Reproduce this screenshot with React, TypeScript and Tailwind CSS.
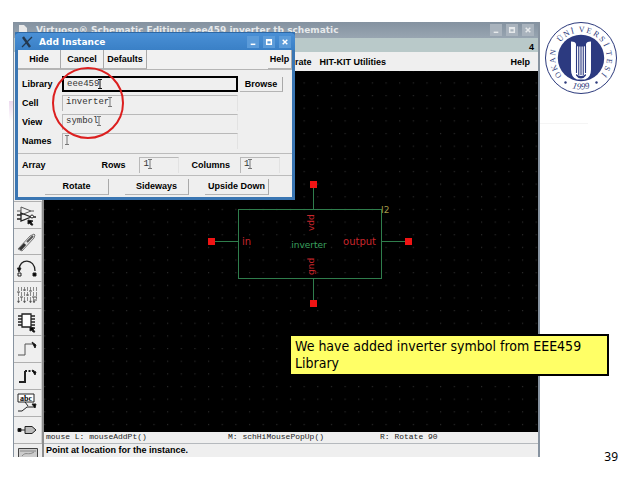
import type { ReactNode } from "react";

const sans = "font-['Liberation_Sans',Arial,sans-serif]";
const mono = "font-['Liberation_Mono','Courier_New',monospace]";
const title = "font-['DejaVu_Sans',Verdana,sans-serif]";

function WindowButtons({ className }: { className: string }) {
  const glyphs = [
    { label: "Minimize", d: "M4 9h5" },
    { label: "Maximize", d: "M4 4h5v5h-5zM4 5h5" },
    { label: "Close", d: "M4 4l5 5M9 4l-5 5" },
  ];
  return (
    <div className="ml-auto flex gap-1">
      {glyphs.map((g) => (
        <button key={g.label} aria-label={g.label} className={`size-3 ${className}`}>
          <svg viewBox="0 0 13 13" className="size-3" fill="none" stroke="currentColor" strokeWidth="1.6">
            <path d={g.d} />
          </svg>
        </button>
      ))}
    </div>
  );
}

function FormButton({ children, className = "" }: { children: ReactNode; className?: string }) {
  return (
    <button className={`border-r border-b border-r-[#a9a9a9] border-b-[#b4b4b4] text-center ${className}`}>
      {children}
    </button>
  );
}

function TextField({ id, value, active = false }: { id: string; value: string; active?: boolean }) {
  return (
    <div
      className={`relative h-4 text-[9px] font-normal text-[#333] ${mono} ${
        active ? "border-2 border-black" : "border-t border-l border-t-[#b9b9b9] border-l-[#b9b9b9] border-r border-r-[#e2e2e2]"
      }`}
    >
      <input
        id={id}
        defaultValue={value}
        className="block h-3 w-full bg-transparent pl-[3px] leading-3 outline-none"
      />
      <svg
        className="absolute top-0 h-3 w-1"
        style={{ left: `calc(${value.length}ch + 2px)` }}
        viewBox="0 0 4 12"
        fill="none"
        stroke={active ? "#111" : "#777"}
      >
        <path d="M0 1.5h4M2 1v9M0 10.5h4" />
      </svg>
    </div>
  );
}

function AddInstanceDialog() {
  return (
    <section className={`absolute top-8 left-[15px] w-[280px] border-[3px] border-t-0 border-[#3a76b3] bg-[#efefef] text-[9px] leading-3 font-bold text-black ${sans}`}>
      <header className={`-mx-[3px] flex h-[18px] items-center rounded-t-sm border-t border-[#2d68a5] bg-linear-to-b from-[#4a90d6] to-[#3a80c6] pr-1 pl-1.5 text-white ${title}`}>
        <svg viewBox="0 0 12 12" className="mr-1.5 h-3 w-3" fill="none" stroke="#23384f">
          <path d="M2 1l7 10" strokeWidth="2.4" />
          <path d="M11 1L1 11" strokeWidth="1.2" />
        </svg>
        <h2>Add Instance</h2>
        <WindowButtons className="bg-[#5b9bd9]" />
      </header>

      <div className="flex h-5 border-b border-[#b5b5b5] bg-[#f1f1f1]">
        <FormButton className="w-[43px]">Hide</FormButton>
        <FormButton className="w-[43px]">Cancel</FormButton>
        <FormButton className="w-[43px]">Defaults</FormButton>
        <FormButton className="ml-auto w-[24px]">Help</FormButton>
      </div>

      <div className="grid grid-cols-[40px_1fr_54px] items-center gap-y-[3px] pt-1.5 pb-1 pl-1">
        <label htmlFor="library">Library</label>
        <TextField id="library" value="eee459" active />
        <FormButton className="ml-0.5 h-[15px] w-[43px]">Browse</FormButton>
        <label htmlFor="cell">Cell</label>
        <TextField id="cell" value="inverter" />
        <span />
        <label htmlFor="view">View</label>
        <TextField id="view" value="symbol" />
        <span />
        <label htmlFor="names">Names</label>
        <TextField id="names" value="" />
      </div>

      <div className="flex h-[22px] items-center border-t border-[#bcbcbc] pr-3 pl-1">
        <span className="flex-1">Array</span>
        <label htmlFor="rows">Rows</label>
        <div className="mr-3 ml-3.5 w-10">
          <TextField id="rows" value="1" />
        </div>
        <label htmlFor="columns">Columns</label>
        <div className="ml-2.5 w-10">
          <TextField id="columns" value="1" />
        </div>
      </div>

      <div className="flex h-[22px] items-center gap-4 border-t border-[#bcbcbc] pl-[27px]">
        <FormButton className="h-4 w-16">Rotate</FormButton>
        <FormButton className="h-4 w-16">Sideways</FormButton>
        <FormButton className="h-4 w-16">Upside Down</FormButton>
      </div>
    </section>
  );
}

const tools: { name: string; icon: ReactNode }[] = [
  {
    name: "Copy",
    icon: (
      <>
        <path d="M5 3l10 4-10 4zM1 7h4M15 7h3" fill="none" stroke="#555" />
        <path d="M5 9l10 4-10 4zM1 11h4M1 15h4M17 13h3" fill="none" strokeWidth="1.3" />
        <circle cx="16" cy="12.500" r="1.500" fill="#fff" />
        <path d="M12 16l5 1-2 1 2 3-2 0-1-2-2 1z" fill="#000" />
      </>
    ),
  },
  {
    name: "Delete",
    icon: (
      <>
        <path d="M2 18L14 5l4-2 1 1-1 3L6 20z" fill="#e4e4e4" stroke="#777" />
        <path d="M4 18.500L9 13" strokeWidth="3" stroke="#333" />
        <path d="M11 11l6-6" strokeWidth="2" stroke="#555" />
      </>
    ),
  },
  {
    name: "Undo",
    icon: (
      <>
        <path d="M3 13C3 1 19 1 19 14" fill="none" strokeWidth="1.3" />
        <path d="M1.5 11h3.5l-2 4z" fill="#000" />
        <path d="M2 16h3v3h-3z" fill="none" />
        <path d="M17 16h3v3h-3z" fill="#000" />
      </>
    ),
  },
  {
    name: "Property",
    icon: (
      <>
        <path d="M2.500 3v15M5.500 3v15M8.500 3v15M11.500 3v15M14.500 3v15M17.500 3v15M20.500 3v12" fill="none" stroke="#8a8a8a" strokeDasharray="4 1" />
        <path d="M1 8h3M4 13h3M7 6h3M10 11h3M13 7h3M16 13h5M18 16h3" fill="none" stroke="#555" />
        <path d="M1.500 17l1 2 1-2zM7.500 17l1 2 1-2zM13.500 17l1 2 1-2zM17 17l1 2 1-2z" stroke="#555" fill="#555" strokeWidth=".5" />
      </>
    ),
  },
  {
    name: "Instance",
    icon: (
      <>
        <path d="M6 3h9v13h-9z" fill="#fff" strokeWidth="1.3" />
        <path d="M2 5h4M2 8h4M2 11h4M2 14h4M15 5h4M15 8h4M15 11h4M15 14h4" fill="none" strokeWidth="1.5" />
        <path d="M14 16l5 1-2 1 2 3-2 0-1-2-2 1z" fill="#000" />
      </>
    ),
  },
  {
    name: "Wire narrow",
    icon: (
      <>
        <path d="M2 17h7V6h9" fill="none" stroke="#555" />
        <path d="M16 4l3 6 1-3z" fill="#000" />
      </>
    ),
  },
  {
    name: "Wire wide",
    icon: (
      <>
        <path d="M3 17h6V6" fill="none" strokeWidth="2" />
        <path d="M9 6h9" fill="none" strokeWidth="2" strokeDasharray="2 1.5" />
        <path d="M16 5l3 5 1-3z" fill="#000" />
      </>
    ),
  },
  {
    name: "Wire name",
    icon: (
      <>
        <path d="M2 2h16v8h-16z" fill="#fff" />
        <text x="10" y="8.5" textAnchor="middle" fontSize="8" fontWeight="bold" stroke="none" fontFamily="Liberation Serif, serif">abc</text>
        <path d="M9 10l3 4M2 19h4l5-4h8" fill="none" />
        <path d="M16 12l4 0-1 4z" fill="#000" />
      </>
    ),
  },
  {
    name: "Pin",
    icon: (
      <>
        <path d="M2 9.500h3v3h-3z" fill="#000" />
        <path d="M5 11h4" />
        <path d="M9 7.500h7l4 3.500-4 3.500h-7z" fill="#bbb" />
      </>
    ),
  },
];

function Toolbar() {
  return (
    <div className="flex w-[30px] shrink-0 flex-col border-r-2 border-[#8d8d8d] bg-[#efefef]">
      <div className="flex-[5]" />
      {tools.map((tool) => (
        <button
          key={tool.name}
          aria-label={tool.name}
          className="flex min-h-0 flex-1 basis-0 items-center justify-center border-t border-r border-t-[#b0b0b0] border-r-[#d0d0d0] pr-0.5"
        >
          <svg viewBox="0 0 22 22" className="size-[22px]" stroke="#222" strokeWidth="1">
            {tool.icon}
          </svg>
        </button>
      ))}
      <button aria-label="Options" className="flex h-3.5 justify-center border-t border-[#b0b0b0] pt-1">
        <svg viewBox="0 0 20 9" className="h-[9px] w-5" fill="#ccc" stroke="#444">
          <path d="M.5 9V.5h19V9" />
          <path d="M2 3h16M4 8c4-5 6 0 12-4" fill="none" stroke="#888" />
        </svg>
      </button>
    </div>
  );
}

function Schematic() {
  const pins = [
    [269, 113],
    [167, 170],
    [364, 170],
    [269, 232],
  ];
  return (
    <svg className="min-h-0 w-full flex-1 bg-black font-['DejaVu_Sans',sans-serif] font-normal" fontSize="10">
      <defs>
        <pattern id="grid" x="8" y="5.500" width="13.650" height="12.650" patternUnits="userSpaceOnUse">
          <rect x="6" y="6" width="1" height="1" fill="#3c3c3c" />
        </pattern>
      </defs>
      <rect width="100%" height="100%" fill="url(#grid)" />
      <g fill="none" stroke="#2f7d4c">
        <rect x="194.500" y="138.500" width="143" height="69" />
        <path d="M269.500 113v25M269.500 208v24M167 170.500h27M338 170.500h26" />
      </g>
      {pins.map(([x, y]) => (
        <rect key={`${x}-${y}`} x={x - 3} y={y - 3} width="7" height="7" fill="#f01414" />
      ))}
      <g fill="#c8262c">
        <text x="198" y="174">in</text>
        <text x="332" y="174" textAnchor="end">output</text>
        <text transform="translate(270 160) rotate(-90)" fontSize="9">vdd</text>
        <text transform="translate(270 204) rotate(-90)" fontSize="9">gnd</text>
      </g>
      <text x="265" y="177" textAnchor="middle" fontSize="9" fill="#3aa05f">inverter</text>
      <text x="337" y="142" fontSize="9" fill="#a39a48">I2</text>
    </svg>
  );
}

function SchematicWindow() {
  return (
    <section className={`mt-[22px] mb-[21px] ml-[13px] flex min-w-0 flex-1 flex-col border-r-2 border-l border-[#8793a0] text-[9px] leading-3 font-bold ${sans}`}>
      <header className={`flex h-4 items-center bg-linear-to-b from-[#8492a0] to-[#98a5b1] pr-1 pl-1 text-[#e6e9eb] ${title}`}>
        <svg viewBox="0 0 10 10" className="mr-2 size-2.5" fill="#e8e8e8">
          <path d="M1 0h5l3 3v7h-8z" />
        </svg>
        <h1 className="whitespace-nowrap">Virtuoso® Schematic Editing: eee459 inverter tb schematic</h1>
        <WindowButtons className="bg-[#a9b3bd]" />
      </header>
      <div className="flex h-3.5 items-center justify-end bg-[#b9c9c9] pr-1 pt-1">4</div>
      <nav className="flex h-[19px] items-center bg-[#efefef] pr-2">
        <div className="flex w-[372px] justify-end gap-2">
          <a href="#rate">rate</a>
          <a href="#hitkit">HIT-KIT Utilities</a>
        </div>
        <a href="#help" className="ml-auto">Help</a>
      </nav>
      <div className="flex min-h-0 flex-1">
        <Toolbar />
        <div className="flex min-w-0 flex-1 flex-col">
          <Schematic />
          <div className={`grid h-3 grid-cols-[182px_152px_1fr] border-b border-[#b5b9bd] bg-[#efefef] pl-0.5 text-[8px] leading-[10px] font-normal text-[#222] ${mono}`}>
            <span>mouse L: mouseAddPt()</span>
            <span>M: schHiMousePopUp()</span>
            <span>R: Rotate 90</span>
          </div>
          <p className="h-[13px] bg-[#efefef] pl-0.5">Point at location for the instance.</p>
        </div>
      </div>
    </section>
  );
}

const ringText = "OKAN ÜNİVERSİTESİ";

// Glyphs sit evenly on a circle, from lower left over the top to lower right
const ring = [...ringText].map((_, i) => {
  const angle = -127 + (i * 256) / (ringText.length - 1);
  const start = ((angle - 6) * Math.PI) / 180;
  return { x: 37 + 26 * Math.sin(start), y: 37 - 26 * Math.cos(start), angle };
});

function UniversityLogo() {
  return (
    <svg viewBox="0 0 74 74" className="mt-[21px] ml-1 size-[74px]" role="img" aria-label="Okan Üniversitesi">
      <defs>
        <path id="year" d="M15 59.500A31.500 31.500 0 0 0 59 59.500" />
      </defs>
      <circle cx="37" cy="37" r="35.500" fill="#fff" stroke="#2c3a7c" />
      <circle cx="37" cy="37" r="23.200" fill="#2c3a80" />
      <path d="M27 20.500q5 0 5 3v31q2 3 5 3t5-3v-31q0-3 5-3v28q0 8-6 10h-8q-6-2-6-10z" fill="#fff" />
      <path d="M32 25q5 1 10 0v28q-5 4-10 0z" fill="#fff" />
      <path d="M32.500 25v27M34.750 25v29M37 25v29M39.250 25v29M41.500 25v27" stroke="#2c3a80" strokeWidth="1.100" />
      <g fill="#2c3a7c" fontFamily="Liberation Serif, serif" fontSize="8">
        <text
          x={ring.map((g) => g.x.toFixed(2)).join(" ")}
          y={ring.map((g) => g.y.toFixed(2)).join(" ")}
          rotate={ring.map((g) => g.angle.toFixed(1)).join(" ")}
        >
          {ringText}
        </text>
        <text textAnchor="middle" fontSize="9" fontStyle="italic">
          <textPath href="#year" startOffset="50%">1999</textPath>
        </text>
        <circle cx="21.500" cy="61.500" r="1.200" />
        <circle cx="52.500" cy="61.500" r="1.200" />
      </g>
    </svg>
  );
}

export default function App() {
  return (
    <main className="relative flex min-h-screen overflow-hidden bg-white text-black">
      {/* Slide background accents */}
      <div className="absolute top-[101px] left-[9px] h-5 w-1 bg-linear-to-b from-[#ecd9ee] to-white" />

      <SchematicWindow />

      <aside className="flex w-[98px] shrink-0 flex-col">
        <UniversityLogo />
        <div className="mt-7 h-px w-12 bg-[#f5f5f5]" />
        <p className="mt-auto mr-5 mb-[13px] text-right font-['Noto_Sans',sans-serif] text-[12px] leading-4">39</p>
      </aside>

      <AddInstanceDialog />

      {/* Highlight around the library, cell and view values */}
      <div className="pointer-events-none absolute top-[67px] left-[52px] size-[72px] rounded-full border-2 border-[#dc1f1f]" />

      <p className="absolute top-[334px] left-[289px] w-80 border-2 border-black bg-[#ffff66] px-1 pt-0.5 pb-0.5 font-['DejaVu_Sans_Condensed','DejaVu_Sans',sans-serif] text-[14px] leading-[17px]">
        We have added inverter symbol from EEE459 Library
      </p>
    </main>
  );
}
